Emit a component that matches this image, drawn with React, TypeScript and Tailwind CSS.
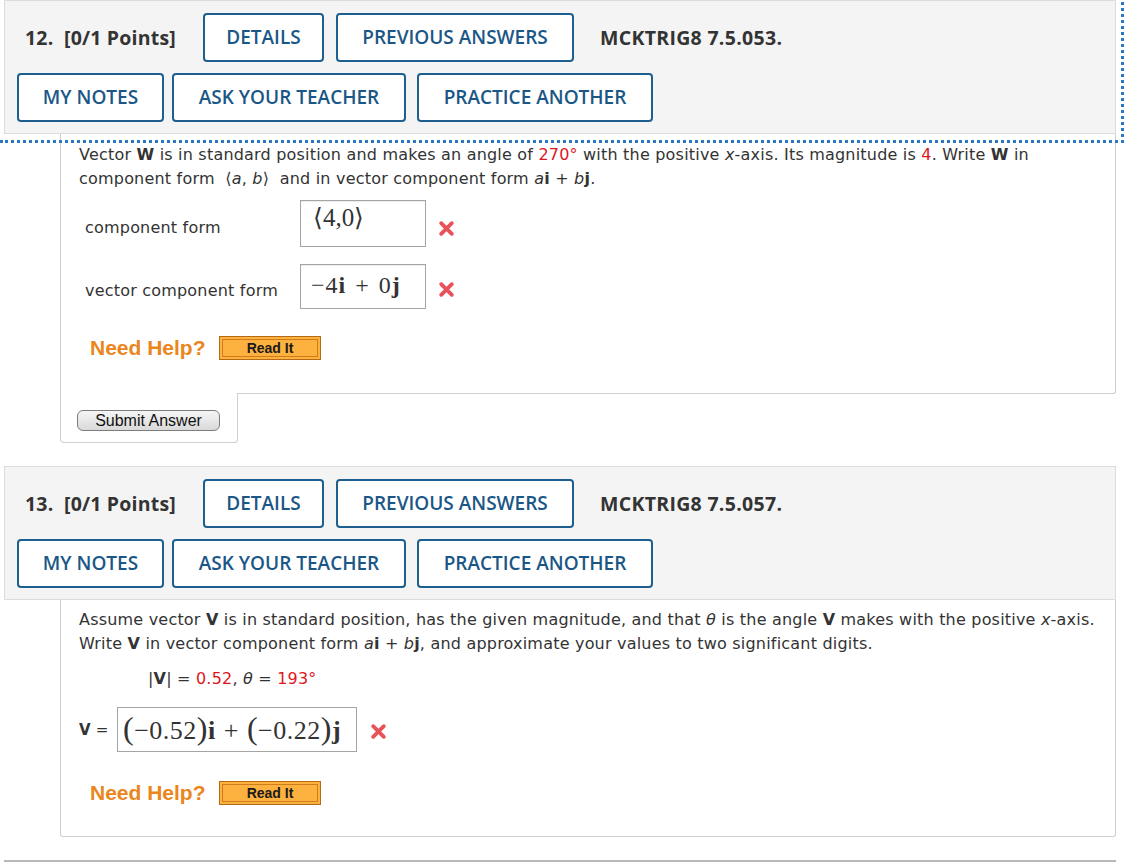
import React from 'react';

const BTN =
  "flex items-center justify-center h-[49px] rounded-[4px] border-2 border-[#1d5f8e] text-[19px] font-semibold text-[#1b5786] bg-white font-['Open_Sans',sans-serif]";

function RedX() {
  return (
    <svg width="17" height="17" viewBox="0 0 16 16" className="shrink-0">
      <path d="M3 3 L13 13 M13 3 L3 13" stroke="#e8535a" strokeWidth="3.6" strokeLinecap="round" />
    </svg>
  );
}

function Red({ children }: { children: React.ReactNode }) {
  return <span className="text-[#e0161f]">{children}</span>;
}

function Header({ num, code, active }: { num: number; code: string; active?: boolean }) {
  return (
    <div className="font-['Open_Sans',sans-serif] bg-[#f4f4f4] border border-[#dcdcdc] pt-[12px] pb-[11px]">
      <div className="flex items-center pl-[20px]">
        <span className="w-[178px] text-[19.5px] font-bold text-[#333] tracking-[0.2px]">
          {num}.&nbsp;&nbsp;[0/1 Points]
        </span>
        <div className={`${BTN} w-[121px]`}>DETAILS</div>
        <div className={`${BTN} w-[238px] ml-[12px] ${active ? 'bg-[#e4ebf2]' : ''}`}>PREVIOUS ANSWERS</div>
        <span className="ml-[26px] text-[19.5px] font-bold text-[#333] tracking-[0.3px]">{code}</span>
      </div>
      <div className="flex items-center pl-[12px] mt-[11px]">
        <div className={`${BTN} w-[147px]`}>MY NOTES</div>
        <div className={`${BTN} w-[234px] ml-[8px]`}>ASK YOUR TEACHER</div>
        <div className={`${BTN} w-[236px] ml-[11px]`}>PRACTICE ANOTHER</div>
      </div>
    </div>
  );
}

function NeedHelp() {
  return (
    <div className="flex items-center pl-[11px] font-['Liberation_Sans',Arial,sans-serif] tracking-normal">
      <span className="text-[21px] font-bold text-[#ea861c] w-[129px]">Need Help?</span>
      <div className="w-[102px] h-[24px] border border-[#b56a16] bg-[#fdb13f] p-[2px]">
        <div className="h-full border border-[#d07c1c] flex items-center justify-center text-[14px] font-bold text-[#1a1a1a]">
          Read It
        </div>
      </div>
    </div>
  );
}

export default function App() {
  return (
    <div className="w-[1136px] h-[864px] bg-white overflow-hidden relative">
      <div className="ml-[4px] w-[1112px]">
        {/* 12번 문제 */}
        <div className="relative">
          <Header num={12} code="MCKTRIG8 7.5.053." active />
          <div className="font-['DejaVu_Sans',sans-serif] ml-[56px] border border-t-0 border-[#cfcfcf] rounded-br-[3px] bg-white pt-[9px] pl-[18px] pb-[33px] text-[16px] tracking-[0.2px] text-[#333] leading-[24px]">
            <p>
              Vector <b>W</b> is in standard position and makes an angle of <Red>270°</Red> with the positive{' '}
              <i>x</i>-axis. Its magnitude is <Red>4</Red>. Write <b>W</b> in
              <br />
              component form &nbsp;⟨<i>a</i>, <i>b</i>⟩&nbsp; and in vector component form <i>a</i>
              <b>i</b> + <i>b</i>
              <b>j</b>.
            </p>
            <div className="flex items-center mt-[9px] pl-[6px]">
              <span className="w-[215px] pt-[9px]">component form</span>
              <div className="w-[126px] h-[47px] border border-[#a5a5a5] shadow-[inset_0_1px_1px_rgba(0,0,0,0.08)] pl-[12px] pt-[2px]">
                <span className="font-['Liberation_Serif',serif] text-[25px] leading-[30px] text-[#333] tracking-normal">⟨4,0⟩</span>
              </div>
              <div className="ml-[12px] pt-[9px]">
                <RedX />
              </div>
            </div>
            <div className="flex items-center mt-[17px] pl-[6px]">
              <span className="w-[215px] pt-[9px]">vector component form</span>
              <div className="w-[126px] h-[45px] border border-[#a5a5a5] shadow-[inset_0_1px_1px_rgba(0,0,0,0.08)] pl-[10px] pt-[5px]">
                <span className="font-['Liberation_Serif',serif] text-[24px] leading-[30px] text-[#333] tracking-[1px]">
                  −4<b>i</b>
                  <span className="mx-[9px]">+</span>0<b>j</b>
                </span>
              </div>
              <div className="ml-[12px] pt-[6px]">
                <RedX />
              </div>
            </div>
            <div className="mt-[27px]">
              <NeedHelp />
            </div>
          </div>
          <div className="ml-[56px] -mt-px w-[178px] bg-white border border-t-0 border-[#cfcfcf] rounded-b-[4px] pt-[17px] pb-[11px] pl-[16px]">
            <div className="w-[143px] h-[21px] rounded-[6px] border border-[#7d7d7d] bg-gradient-to-b from-[#f6f6f6] to-[#d9d9d9] flex items-center justify-center font-['Liberation_Sans',Arial,sans-serif] text-[16px] text-[#111]">
              Submit Answer
            </div>
          </div>
          {/* 포커스 점선 */}
          <div className="absolute left-[-4px] top-[-4px] w-[1124px] h-[147px] border-r-[3px] border-b-[3px] border-dotted border-[#2a78c2] pointer-events-none" />
        </div>

        {/* 13번 문제 */}
        <div className="mt-[23px]">
          <Header num={13} code="MCKTRIG8 7.5.057." />
          <div className="font-['DejaVu_Sans',sans-serif] ml-[56px] border border-t-0 border-[#cfcfcf] rounded-b-[3px] bg-white pt-[8px] pl-[18px] pb-[31px] text-[16px] tracking-[0.2px] text-[#333] leading-[24px]">
            <p>
              Assume vector <b>V</b> is in standard position, has the given magnitude, and that <i>θ</i> is the angle{' '}
              <b>V</b> makes with the positive <i>x</i>-axis.
              <br />
              Write <b>V</b> in vector component form <i>a</i>
              <b>i</b> + <i>b</i>
              <b>j</b>, and approximate your values to two significant digits.
            </p>
            <p className="mt-[11px] pl-[69px]">
              |<b>V</b>| = <Red>0.52</Red>, <i>θ</i> = <Red>193°</Red>
            </p>
            <div className="flex items-center mt-[16px]">
              <span className="w-[38px] text-[15px]">
                <b>V</b> =
              </span>
              <div className="w-[240px] h-[45px] border border-[#a5a5a5] pl-[5px] flex items-center">
                <span className="font-['Liberation_Serif',serif] text-[26px] leading-[30px] text-[#333] whitespace-nowrap tracking-[0.5px]">
                  <span className="text-[32px]">(</span>−0.52<span className="text-[32px]">)</span>
                  <b>i</b>
                  <span className="mx-[8px]">+</span>
                  <span className="text-[32px]">(</span>−0.22<span className="text-[32px]">)</span>
                  <b>j</b>
                </span>
              </div>
              <div className="ml-[13px] pt-[4px]">
                <RedX />
              </div>
            </div>
            <div className="mt-[29px]">
              <NeedHelp />
            </div>
          </div>
        </div>
        <div className="mt-[23px] border-t-2 border-[#b8b8b8]" />
      </div>
    </div>
  );
}
